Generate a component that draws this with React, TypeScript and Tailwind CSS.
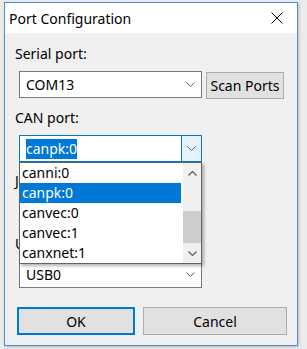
import React from "react";

function Chevron({ className = "" }: { className?: string }) {
  return (
    <svg width="9" height="5" viewBox="0 0 9 5" className={className}>
      <path d="M0.5 0.5 L4.5 4.5 L8.5 0.5" fill="none" stroke="#606060" strokeWidth="1" />
    </svg>
  );
}

function Combo({ value }: { value: string }) {
  return (
    <div className="ml-[4px] w-[183px] h-[27px] bg-white border border-[#7a7a7a] flex items-center justify-between pl-[6px] pr-[6px]">
      <span>{value}</span>
      <Chevron />
    </div>
  );
}

const items = ["canni:0", "canpk:0", "canvec:0", "canvec:1", "canxnet:1"];

export default function App() {
  return (
    <div className="w-[307px] h-[349px] bg-[#ebebeb] pl-[4px] pt-[2px] overflow-hidden font-['Noto_Sans',sans-serif] text-[14px] leading-[19px] text-black">
      {/* window */}
      <div className="w-[294px] h-[344px] border border-[#4a8fd8] flex flex-col bg-[#f0f0f0] shadow-[1px_1px_3px_rgba(0,0,0,0.2)]">
        {/* title bar */}
        <div className="h-[30px] shrink-0 bg-white flex items-center justify-between pl-[4px] pr-[14px]">
          <span>Port Configuration</span>
          <svg width="12" height="12" viewBox="0 0 12 12">
            <path d="M0.5 0.5 L11.5 11.5 M11.5 0.5 L0.5 11.5" stroke="#000" strokeWidth="1" fill="none" />
          </svg>
        </div>

        {/* body */}
        <div className="flex-1 pl-[10px] pt-[11px] flex flex-col items-start">
          <span>Serial port:</span>
          <div className="mt-[8px] flex items-start">
            <Combo value="COM13" />
            <button className="ml-[4px] mt-[1px] w-[78px] h-[27px] bg-[#e1e1e1] border border-[#adadad] flex items-center justify-center">
              Scan Ports
            </button>
          </div>

          <span className="mt-[9px]">CAN port:</span>
          <div className="mt-[8px] relative z-10">
            {/* focused combo */}
            <div className="ml-[4px] w-[183px] h-[27px] bg-white border border-[#0078d7] flex items-stretch">
              <div className="flex-1 flex items-center pl-[6px]">
                <span className="bg-[#0078d7] text-white leading-[20px]">canpk:0</span>
              </div>
              <div className="w-[20px] bg-[#e5f1fb] border-l border-[#0078d7] flex items-center justify-center">
                <Chevron />
              </div>
            </div>

            {/* open list */}
            <div className="absolute left-[4px] top-[27px] w-[183px] h-[102px] bg-white border border-[#646464] shadow-[2px_2px_3px_rgba(0,0,0,0.3)] flex">
              <div className="flex-1 flex flex-col">
                {items.map((it) => (
                  <div
                    key={it}
                    className={
                      it === "canpk:0"
                        ? "h-[20px] pl-[2px] leading-[20px] bg-[#0078d7] text-white mr-[2px]"
                        : "h-[20px] pl-[2px] leading-[20px]"
                    }
                  >
                    {it}
                  </div>
                ))}
              </div>
              {/* scrollbar */}
              <div className="w-[18px] bg-[#f0f0f0] flex flex-col items-center">
                <div className="h-[20px] flex items-center justify-center">
                  <svg width="9" height="5" viewBox="0 0 9 5">
                    <path d="M0.5 4.5 L4.5 0.5 L8.5 4.5" fill="none" stroke="#606060" strokeWidth="1.3" />
                  </svg>
                </div>
                <div className="mt-[28px] w-full h-[32px] bg-[#cdcdcd]" />
                <div className="mt-auto h-[20px] flex items-center justify-center">
                  <svg width="9" height="5" viewBox="0 0 9 5">
                    <path d="M0.5 0.5 L4.5 4.5 L8.5 0.5" fill="none" stroke="#606060" strokeWidth="1.3" />
                  </svg>
                </div>
              </div>
            </div>
          </div>

          <span className="mt-[9px]">J1939 address:</span>
          <div className="mt-[8px]">
            <Combo value="0" />
          </div>

          <span className="mt-[9px]">USB port:</span>
          <div className="mt-[8px]">
            <Combo value="USB0" />
          </div>

          <div className="ml-[2px] mt-[19px] flex gap-[8px]">
            <button className="w-[118px] h-[28px] bg-[#e1e1e1] border-2 border-[#0078d7] flex items-center justify-center">
              OK
            </button>
            <button className="w-[144px] h-[28px] bg-[#e1e1e1] border border-[#adadad] flex items-center justify-center">
              Cancel
            </button>
          </div>
        </div>
      </div>
    </div>
  );
}
